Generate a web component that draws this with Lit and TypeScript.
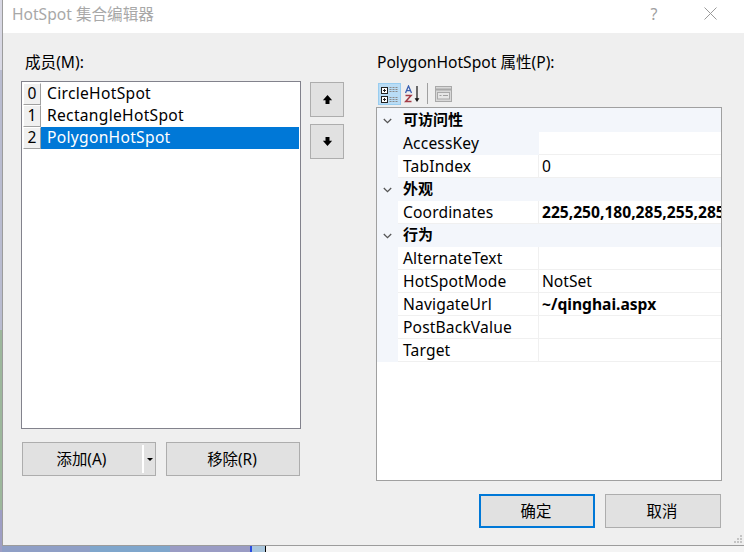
import { LitElement, html, css, svg } from "lit";
import { customElement } from "lit/decorators.js";

const members = ["CircleHotSpot", "RectangleHotSpot", "PolygonHotSpot"];

type Row = { name: string; value?: string; bold?: boolean; cat?: boolean };
const rows: Row[] = [
  { name: "可访问性", cat: true },
  { name: "AccessKey" },
  { name: "TabIndex", value: "0" },
  { name: "外观", cat: true },
  { name: "Coordinates", value: "225,250,180,285,255,285", bold: true },
  { name: "行为", cat: true },
  { name: "AlternateText" },
  { name: "HotSpotMode", value: "NotSet" },
  { name: "NavigateUrl", value: "~/qinghai.aspx", bold: true },
  { name: "PostBackValue" },
  { name: "Target" },
];

@customElement("app-root")
export class AppRoot extends LitElement {
  static styles = css`
    :host {
      display: block;
      width: 744px;
      height: 552px;
      overflow: hidden;
      font-family: "Noto Sans", "Noto Sans CJK SC", sans-serif;
      font-size: 15.6px;
      color: #000;
      background: linear-gradient(90deg, #8f9fc6 0 90px, #7fa6cc 90px 170px, #9a9cc4 170px 250px, #2a4de0 250px 252px, #a9c6dd 252px 265px, #000 265px 266px, #f4f4f4 266px);
    }
    .shell { display: flex; height: 552px; }
    .strip { width: 2px; flex: none; background: linear-gradient(#d8d8e4 0 70px, #b9bcd0 70px 330px, #9db79c 330px 510px, #9e9ec4 510px); }
    .dialog {
      width: 742px;
      height: 546px;
      flex: none;
      display: flex;
      flex-direction: column;
      background: #efefef;
      border-left: 1px solid #9c9c9c;
      border-bottom: 1px solid #9c9c9c;
      box-sizing: border-box;
      position: relative;
    }
    .title {
      height: 33px;
      flex: none;
      background: #fff;
      display: flex;
      align-items: center;
      padding-left: 9px;
      color: #a8a8a8;
    }
    .title .t { flex: 1; padding-bottom: 6px; }
    .help { width: 20px; font-size: 16px; color: #a0a0a0; text-align: center; margin-right: 40px; padding-bottom: 6px; }
    .close { width: 13px; height: 13px; margin-right: 27px; margin-bottom: 6px; display: block; }
    .body { flex: 1; display: flex; padding: 0 0 0 18px; min-height: 0; }
    .left { width: 280px; flex: none; display: flex; flex-direction: column; }
    .label { height: 48px; box-sizing: border-box; padding: 19px 0 0 4px; line-height: 20px; white-space: nowrap; }
    .list {
      width: 280px;
      height: 348px;
      box-sizing: border-box;
      border: 1px solid #82828c;
      background: #fff;
      padding: 1px;
    }
    .item { display: flex; height: 22px; line-height: 20px; }
    .idx {
      width: 16px;
      height: 20px;
      margin: 0 1px 1px 0;
      flex: none;
      text-align: center;
      line-height: 19px;
      background: #f0f0f0;
      border: 1px solid;
      border-color: #fff #a0a0a0 #a0a0a0 #fff;
    }
    .name { flex: 1; padding-left: 6px; white-space: nowrap; margin-left: -1px; letter-spacing: 0.3px; }
    .item.sel .name { background: #0078d7; color: #fff; }
    .actions { display: flex; gap: 10px; margin-top: 13px; padding-left: 1px; }
    .btn {
      box-sizing: border-box;
      height: 34px;
      background: #e1e1e1;
      border: 1px solid #adadad;
      display: flex;
      align-items: center;
      justify-content: center;
      padding: 0 2px 2px 0;
      white-space: nowrap;
      font-size: 15.4px;
    }
    .add { width: 134px; padding: 0; }
    .add .main { flex: 1; text-align: center; padding: 0 2px 2px 0; }
    .add .sep { width: 2px; height: 28px; background: #fff; flex: none; }
    .add .drop { width: 11px; flex: none; display: flex; justify-content: center; }
    .caret { width: 0; height: 0; border: 3px solid transparent; border-top: 3px solid #000; border-bottom: 0; }
    .remove { width: 134px; }
    .mid { width: 34px; flex: none; margin-left: 9px; padding-top: 49px; display: flex; flex-direction: column; gap: 7px; }
    .mid .btn { height: 35px; width: 34px; padding: 0; }
    .right { width: 346px; flex: none; margin-left: 32px; display: flex; flex-direction: column; }
    .right .label { padding-left: 1px; height: 50px; }
    .tools { display: flex; height: 24px; flex: none; align-items: flex-start; padding-left: 2px; }
    .tool { width: 23px; height: 22px; display: flex; align-items: center; justify-content: center; box-sizing: border-box; flex: none; }
    .tool.on { background: #b9dcf5; border: 1px solid #99cdf0; }
    .divider { width: 1px; height: 21px; background: #a0a0a0; margin: 0 4px 0 3px; flex: none; }
    .grid {
      height: 374px;
      flex: none;
      box-sizing: border-box;
      border: 1px solid #a0a0a0;
      background: #fff;
      overflow: hidden;
    }
    .row { display: flex; height: 23px; line-height: 22px; }
    .row:first-child { height: 24px; padding-top: 1px; box-sizing: border-box; }
    .row .gut { width: 21px; flex: none; background: #f3f6fb; display: flex; align-items: center; justify-content: center; }
    .row .k { width: 141px; flex: none; padding-left: 5px; box-sizing: border-box; white-space: nowrap; border-right: 1px solid #f0f0f0; border-bottom: 1px solid #f0f0f0; letter-spacing: 0.15px; }
    .row .v { flex: 1; padding-left: 3px; white-space: nowrap; overflow: hidden; border-bottom: 1px solid #f0f0f0; }
    .row.first .k { background: #f3f6fb; border-color: #f3f6fb; }
    .row.cat { background: #f3f6fb; font-weight: 700; font-size: 15px; line-height: 20px; }
    .row.cat .k { border: 0; width: auto; flex: 1; letter-spacing: 0; }
    .b { font-weight: 700; }
    .footer { display: flex; gap: 10px; justify-content: flex-end; padding: 13px 23px 0 0; height: 64px; box-sizing: border-box; flex: none; }
    .footer .btn { width: 116px; }
    .ok { border: 2px solid #0078d7; }
    .grip { position: absolute; right: 1px; bottom: 1px; width: 10px; height: 10px; display: block; }
  `;

  private chevron() {
    return html`<svg width="9" height="6" viewBox="0 0 9 6"><path d="M.8 1 4.5 4.6 8.2 1" fill="none" stroke="#555" stroke-width="1.3"/></svg>`;
  }

  private categorizedIcon() {
    const box = (y: number) => svg`
      <rect x="1.5" y="${y + 0.5}" width="6" height="6" fill="#fff" stroke="#222"/>
      <path d="M3 ${y + 3.5}h3M4.5 ${y + 2}v3" stroke="#222"/>`;
    const lines = (y: number) => svg`
      <path d="M9.5 ${y + 0.5}h8M9.5 ${y + 2.5}h8M9.5 ${y + 4.5}h8" stroke="#8a8a8a" stroke-dasharray="2 1"/>`;
    return html`<svg width="19" height="17" viewBox="0 0 19 17">
      ${box(1)}${lines(1)}${box(10)}${lines(11)}
    </svg>`;
  }

  private azIcon() {
    return html`<svg width="18" height="18" viewBox="0 0 18 18">
      <path d="M1.5 8 4.5 1l3 7M2.6 5.7h3.8" fill="none" stroke="#3a5fb0" stroke-width="1.3"/>
      <path d="M1.5 10.5h5.6L1.7 16.5h5.8" fill="none" stroke="#a33b46" stroke-width="1.5"/>
      <path d="M13 1v13" stroke="#111" stroke-width="1.2"/>
      <path d="M10.6 13.2h4.8L13 17z" fill="#111"/>
    </svg>`;
  }

  private pagesIcon() {
    return html`<svg width="17" height="16" viewBox="0 0 17 16">
      <rect x=".5" y=".5" width="16" height="15" fill="#d8d8d8" stroke="#a9a9a9"/>
      <path d="M1 3.5h15" stroke="#a9a9a9" stroke-width="2"/>
      <rect x="2.5" y="6.5" width="12" height="6.5" fill="#e6e6e6" stroke="#a9a9a9"/>
      <path d="M4.5 9.5h2M8 9.5h5" stroke="#a0a0a0"/>
    </svg>`;
  }

  private arrow(up: boolean) {
    return html`<svg width="11" height="11" viewBox="0 0 10 10">
      <path d="${up ? "M5 1 9.2 5.6H6.8V9H3.2V5.6H.8z" : "M5 9 9.2 4.4H6.8V1H3.2V4.4H.8z"}" fill="#000"/>
    </svg>`;
  }

  render() {
    return html`
      <div class="shell">
        <div class="strip"></div>
        <div class="dialog">
          <div class="title">
            <span class="t">HotSpot 集合编辑器</span>
            <span class="help">?</span>
            <svg class="close" viewBox="0 0 13 13"><path d="M.5.5 12.5 12.5M12.5.5.5 12.5" stroke="#9a9a9a" stroke-width="1"/></svg>
          </div>
          <div class="body">
            <div class="left">
              <div class="label">成员(M):</div>
              <div class="list">
                ${members.map(
                  (m, i) => html`<div class="item ${i === 2 ? "sel" : ""}">
                    <div class="idx">${i}</div>
                    <div class="name">${m}</div>
                  </div>`
                )}
              </div>
              <div class="actions">
                <div class="btn add">
                  <span class="main">添加(A)</span>
                  <span class="sep"></span>
                  <span class="drop"><span class="caret"></span></span>
                </div>
                <div class="btn remove">移除(R)</div>
              </div>
            </div>
            <div class="mid">
              <div class="btn">${this.arrow(true)}</div>
              <div class="btn">${this.arrow(false)}</div>
            </div>
            <div class="right">
              <div class="label">PolygonHotSpot 属性(P):</div>
              <div class="tools">
                <div class="tool on">${this.categorizedIcon()}</div>
                <div class="tool">${this.azIcon()}</div>
                <div class="divider"></div>
                <div class="tool">${this.pagesIcon()}</div>
              </div>
              <div class="grid">
                ${rows.map(
                  (r, i) => r.cat
                    ? html`<div class="row cat"><div class="gut">${this.chevron()}</div><div class="k">${r.name}</div></div>`
                    : html`<div class="row ${i === 1 ? "first" : ""}">
                        <div class="gut"></div>
                        <div class="k">${r.name}</div>
                        <div class="v ${r.bold ? "b" : ""}">${r.value ?? ""}</div>
                      </div>`
                )}
              </div>
            </div>
          </div>
          <div class="footer">
            <div class="btn ok">确定</div>
            <div class="btn">取消</div>
          </div>
          <svg class="grip" viewBox="0 0 10 10"><path d="M7 1h2v2H7zM4 4h2v2H4zM7 4h2v2H7zM1 7h2v2H1zM4 7h2v2H4zM7 7h2v2H7z" fill="#c4c4c4"/></svg>
        </div>
      </div>
    `;
  }
}
